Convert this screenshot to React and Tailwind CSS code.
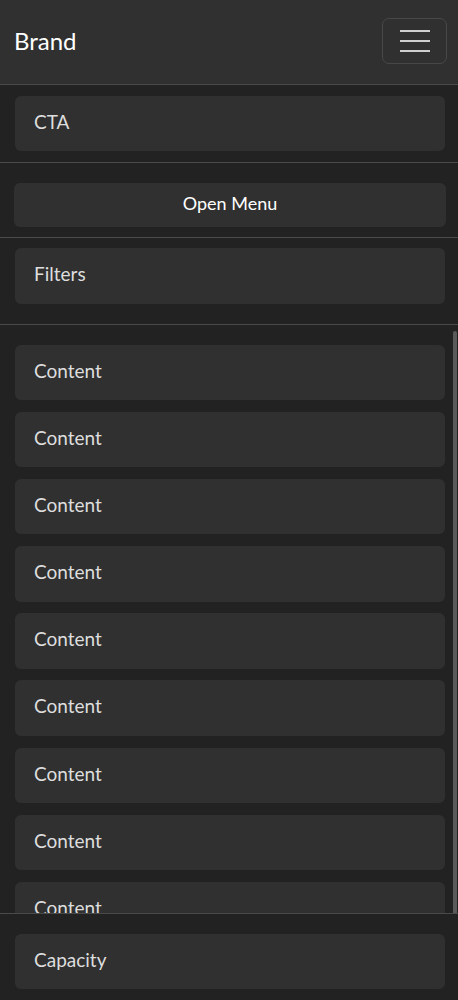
import * as React from "react"

const font = { fontFamily: "Lato, 'Noto Sans', sans-serif" }

// 공통 카드 (어두운 패널 안의 한 줄짜리 박스)
function Card({ children, className = "" }) {
  return (
    <div
      className={`flex h-[55.5px] shrink-0 items-center rounded-[6px] bg-[#303030] pb-[3px] pl-[19px] pr-4 text-[19px] text-[#dedede] ${className}`}
    >
      {children}
    </div>
  )
}

export default function App() {
  const items = Array.from({ length: 9 }, (_, i) => i)

  return (
    <div style={font} className="flex h-[1000px] w-[458px] flex-col overflow-hidden bg-[#222222]">
      {/* 헤더 */}
      <header className="flex h-[85px] shrink-0 items-center justify-between border-b border-[#4a4a4a] bg-[#303030] pb-[2px] pl-[14px] pr-[11px]">
        <span className="text-[24px] text-white">Brand</span>
        <button
          type="button"
          aria-label="Toggle navigation"
          className="flex h-[46px] w-[65px] flex-col items-center justify-center gap-[8px] rounded-[7px] border border-[#484848] bg-[#303030]"
        >
          <span className="block h-[2px] w-[30px] bg-[#cfcfcf]" />
          <span className="block h-[2px] w-[30px] bg-[#cfcfcf]" />
          <span className="block h-[2px] w-[30px] bg-[#cfcfcf]" />
        </button>
      </header>

      {/* CTA */}
      <section className="shrink-0 border-b border-[#4a4a4a] pb-[10.5px] pl-[15px] pr-[13px] pt-[10.5px]">
        <Card>CTA</Card>
      </section>

      {/* 메뉴 버튼 */}
      <section className="shrink-0 border-b border-[#4a4a4a] pb-[10px] pl-[14px] pr-[12px] pt-[20px]">
        <button
          type="button"
          className="flex h-[44px] w-full items-center justify-center rounded-[6px] bg-[#303030] pb-[2px] text-[18px] text-white"
        >
          Open Menu
        </button>
      </section>

      {/* 필터 */}
      <section className="shrink-0 border-b border-[#4a4a4a] pb-[20px] pl-[15px] pr-[13px] pt-[10.5px]">
        <Card>Filters</Card>
      </section>

      {/* 스크롤 영역 */}
      <main className="relative min-h-0 flex-1 overflow-hidden">
        <div className="flex flex-col gap-[11.7px] pl-[15px] pr-[13px] pt-[20px]">
          {items.map((i) => (
            <Card key={i}>Content</Card>
          ))}
        </div>
        <div className="absolute right-[1px] top-[6px] h-[600px] w-[4px] rounded-full bg-[#5a5a5a]" />
      </main>

      {/* 푸터 */}
      <footer className="shrink-0 border-t border-[#4a4a4a] pb-[11px] pl-[15px] pr-[13px] pt-[20px]">
        <Card>Capacity</Card>
      </footer>
    </div>
  )
}
